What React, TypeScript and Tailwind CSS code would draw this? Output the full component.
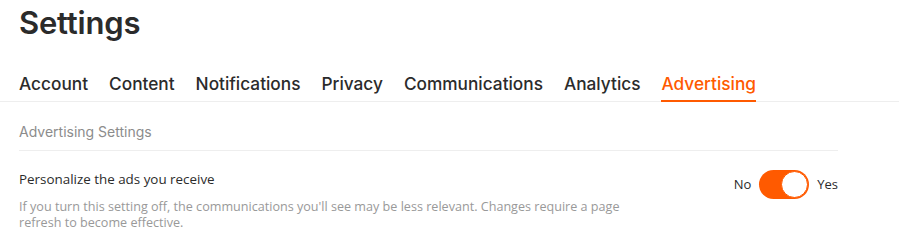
import { useState } from "react";

const tabs = [
  "Account",
  "Content",
  "Notifications",
  "Privacy",
  "Communications",
  "Analytics",
  "Advertising",
];

export default function App() {
  const [active, setActive] = useState("Advertising");
  const [on, setOn] = useState(true);

  return (
    <div className="min-h-screen bg-white text-[#2b2b2b] font-['Inter',sans-serif]">
      <h1 className="pl-[19px] pt-[7px] text-[31px] leading-[32px] font-semibold tracking-[-0.2px]">
        Settings
      </h1>

      <nav className="mt-[33px] pl-[19px] flex gap-[21px] border-b border-[#eeeeee]">
        {tabs.map((t) => (
          <button
            key={t}
            onClick={() => setActive(t)}
            className={`text-[17.25px] leading-[24px] font-medium pb-[4px] -mb-px border-b-2 ${
              active === t
                ? "text-[#ff5a00] border-[#ff5a00]"
                : "text-[#2b2b2b] border-transparent"
            }`}
          >
            {t}
          </button>
        ))}
      </nav>

      <section className="ml-[19px] w-[819px]">
        <div className="pt-[20px] pb-[8px] text-[14px] leading-[20px] text-[#8c8c8c] border-b border-[#eeeeee]">
          Advertising Settings
        </div>

        <div className="flex justify-between pt-[19px] font-['Open_Sans',sans-serif]">
          <div>
            <div className="text-[13.4px] leading-[18px] text-[#2b2b2b]">
              Personalize the ads you receive
            </div>
            <p className="mt-[11px] w-[640px] text-[12.6px] leading-[16px] text-[#999999]">
              If you turn this setting off, the communications you'll see may
              be less relevant. Changes require a page refresh to become
              effective.
            </p>
          </div>

          <div className="flex items-center gap-[8px] h-[29px] text-[13px] text-[#2b2b2b]">
            <span>No</span>
            <button
              onClick={() => setOn(!on)}
              className={`relative w-[50px] h-[29px] rounded-full ${
                on ? "bg-[#ff5a00]" : "bg-[#dddddd]"
              }`}
            >
              <span
                className={`absolute top-[1px] w-[27px] h-[27px] rounded-full bg-white border border-[#ff5a00] ${
                  on ? "right-[1px]" : "left-[1px]"
                }`}
              />
            </button>
            <span>Yes</span>
          </div>
        </div>
      </section>
    </div>
  );
}
